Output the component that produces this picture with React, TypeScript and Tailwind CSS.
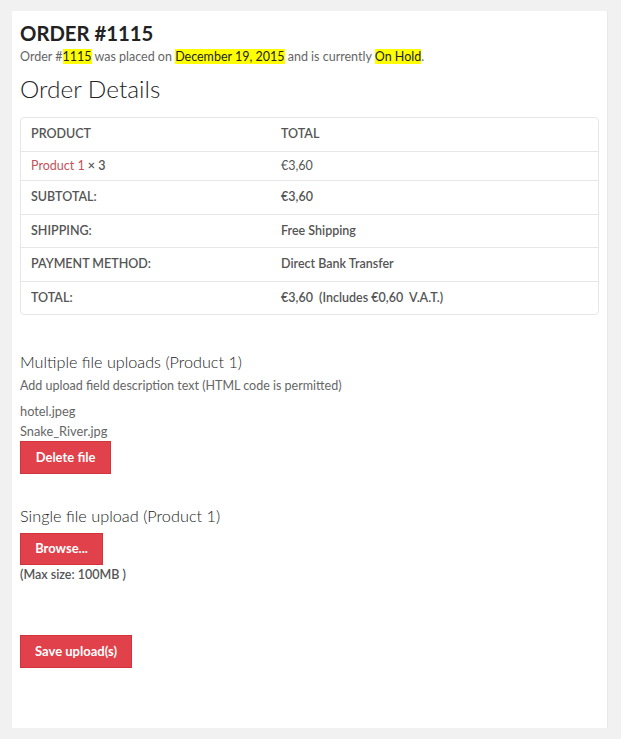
import React from 'react';

const rows = [
    { label: 'SUBTOTAL:', value: '€3,60', h: 'h-[34px]' },
    { label: 'SHIPPING:', value: 'Free Shipping', h: 'h-[33px]' },
    { label: 'PAYMENT METHOD:', value: 'Direct Bank Transfer', h: 'h-[34px]' },
    { label: 'TOTAL:', value: '€3,60\u00a0 (Includes €0,60\u00a0 V.A.T.)', h: 'h-[33px]' },
];

function RedButton({ children, className }: { children: React.ReactNode; className: string }) {
    return (
        <button className={`bg-[#e0414a] border border-[#d2343c] text-white font-bold text-[13px] ${className}`}>
            {children}
        </button>
    );
}

export default function App() {
    return (
        <div className="min-h-[739px] bg-[#f1f1f1] pt-[11px] pl-[12px] pr-[13px] pb-[11px] font-['Lato',sans-serif] text-[#666]">
            <div className="bg-white h-[717px] px-[8px] pt-[8px] border-r border-[#e8e8e8]">
                <h2 className="text-[20.3px] font-bold text-[#222] leading-[28px]">ORDER #1115</h2>
                <p className="text-[12.5px] leading-[18px] mt-[1px] text-[#666]">
                    Order #<mark className="bg-[#ffff00] text-[#222]">1115</mark> was placed on{' '}
                    <mark className="bg-[#ffff00] text-[#222]">December 19, 2015</mark> and is currently{' '}
                    <mark className="bg-[#ffff00] text-[#222]">On Hold</mark>.
                </p>
                <h2 className="text-[24.4px] font-light text-[#222] leading-[32px] mt-[7px]">Order Details</h2>

                <div className="mt-[12px] border border-[#e6e6e6] rounded-[4px] text-[12.5px] text-[#555]">
                    <div className="grid grid-cols-[260px_1fr] h-[33px] items-center font-semibold uppercase">
                        <div className="pl-[10px]">Product</div>
                        <div>Total</div>
                    </div>
                    <div className="grid grid-cols-[260px_1fr] h-[29px] items-center border-t border-[#e6e6e6]">
                        <div className="pl-[10px]">
                            <span className="text-[#c4525a]">Product 1</span> <strong className="font-semibold text-[#555]">× 3</strong>
                        </div>
                        <div>€3,60</div>
                    </div>
                    {rows.map((r) => (
                        <div key={r.label} className={`grid grid-cols-[260px_1fr] ${r.h} items-center border-t border-[#e6e6e6] font-semibold`}>
                            <div className="pl-[10px]">{r.label}</div>
                            <div>{r.value}</div>
                        </div>
                    ))}
                </div>

                <h3 className="mt-[36px] text-[16.2px] font-light text-[#222] leading-[22px]">Multiple file uploads (Product 1)</h3>
                <p className="mt-[4px] text-[12.5px] leading-[18px]">Add upload field description text (HTML code is permitted)</p>
                <div className="mt-[6px] text-[12.8px] leading-[20px]">
                    <div>hotel.jpeg</div>
                    <div>Snake_River.jpg</div>
                </div>
                <RedButton className="w-[91px] h-[33px]">Delete file</RedButton>

                <h3 className="mt-[31px] text-[16.3px] font-light text-[#222] leading-[22px]">Single file upload (Product 1)</h3>
                <RedButton className="mt-[6px] w-[83px] h-[32px] block">Browse...</RedButton>
                <p className="text-[12.5px] font-semibold text-[#555] leading-[20px]">(Max size: 100MB )</p>

                <RedButton className="mt-[50px] w-[112px] h-[33px]">Save upload(s)</RedButton>
            </div>
        </div>
    );
}
